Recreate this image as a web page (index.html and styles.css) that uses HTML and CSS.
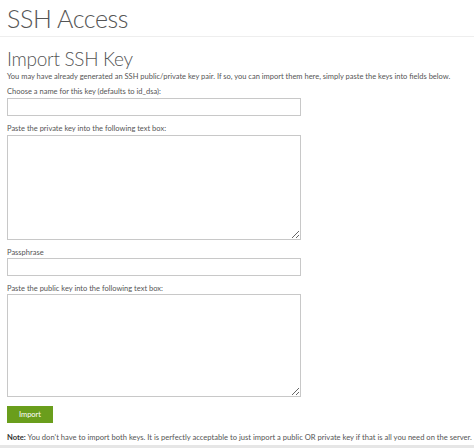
FILE: index.html
```html
<!DOCTYPE html>
<html>
<head>
<meta charset="utf-8">
<link rel="stylesheet" href="styles.css">
</head>
<body>
<div class="page">
  <h1 class="title">SSH Access</h1>
  <div class="content">
    <h2 class="subtitle">Import SSH Key</h2>
    <p class="intro">You may have already generated an SSH public/private key pair. If so, you can import them here, simply paste the keys into fields below.</p>
    <label class="lbl lbl-first">Choose a name for this key (defaults to id_dsa):</label>
    <input class="field" type="text">
    <label class="lbl lbl-priv">Paste the private key into the following text box:</label>
    <textarea class="area"></textarea>
    <label class="lbl lbl-pass">Passphrase</label>
    <input class="field" type="text">
    <label class="lbl lbl-pub">Paste the public key into the following text box:</label>
    <textarea class="area area-pub"></textarea>
    <button class="btn">Import</button>
    <p class="note"><b>Note:</b> You don't have to import both keys. It is perfectly acceptable to just import a public OR private key if that is all you need on the server.</p>
  </div>
</div>
<div class="footer-bar"></div>
</body>
</html>
```

FILE: styles.css
```css
html, body {
  margin: 0;
  padding: 0;
  background: #fff;
}
body {
  font-family: Lato, "Open Sans", "Liberation Sans", sans-serif;
  color: #555;
  width: 474px;
  height: 448px;
  overflow: hidden;
  display: flex;
  flex-direction: column;
}
.page {
  flex: 1;
  display: flex;
  flex-direction: column;
}
.title {
  margin: 0;
  padding: 1px 7px 1px;
  font-weight: 300;
  font-size: 25px;
  line-height: 34px;
  letter-spacing: -0.4px;
  color: #555;
  border-bottom: 1px solid #eee;
}
.content {
  padding: 0 7px;
  display: flex;
  flex-direction: column;
  align-items: flex-start;
}
.subtitle {
  margin: 11px 0 0;
  font-weight: 300;
  font-size: 19px;
  line-height: 21px;
  letter-spacing: -0.3px;
  color: #555;
}
.intro,
.lbl,
.note {
  font-size: 7.5px;
  line-height: 11px;
  color: #555;
  white-space: nowrap;
}
.intro {
  margin: 2px 0 0;
}
.lbl {
  display: block;
  margin-top: 6px;
  margin-bottom: 1px;
}
.lbl-first {
  margin-top: 4px;
}
.lbl-priv {
  margin-top: 7px;
}
.lbl-pass {
  margin-top: 7px;
  margin-bottom: 0;
}
.lbl-pub {
  margin-top: 7px;
  margin-bottom: 0;
}
.field {
  box-sizing: border-box;
  width: 294px;
  height: 18px;
  border: 1px solid #c8c8c8;
  margin: 0;
  padding: 0;
  background: #fff;
}
.area {
  box-sizing: border-box;
  width: 294px;
  height: 105px;
  border: 1px solid #c8c8c8;
  margin: 0;
  padding: 0;
  resize: both;
  background: #fff;
}
.area-pub {
  height: 103px;
}
.btn {
  margin-top: 9px;
  width: 46px;
  height: 17px;
  padding: 0;
  border: none;
  background: #6a9e1c;
  color: #fff;
  font-family: Lato, "Open Sans", "Liberation Sans", sans-serif;
  font-size: 7.5px;
}
.note {
  margin: 9px 0 0;
  font-size: 7.6px;
}
.note b {
  color: #333;
  font-weight: 700;
}
.footer-bar {
  height: 3px;
  background: #e6e6e6;
}
```
